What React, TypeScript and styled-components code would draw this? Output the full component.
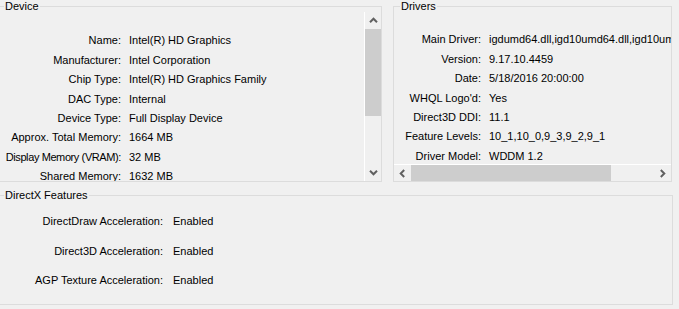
import styled, { createGlobalStyle } from "styled-components";

const GlobalStyle = createGlobalStyle`
  html, body {
    margin: 0;
    padding: 0;
    background: #f0f0f0;
    overflow: hidden;
  }
  body {
    font-family: "Liberation Sans", Arial, sans-serif;
    font-size: 11px;
    color: #000;
  }
`

const Page = styled.div`
  display: flex;
  flex-direction: column;
  gap: 7px;
  width: 682px;
  margin-left: -3px;
`

const TopRow = styled.div`
  display: flex;
  gap: 11px;
`

const Group = styled.fieldset<{ $width: number; $height: number }>`
  box-sizing: border-box;
  width: ${p => p.$width}px;
  height: ${p => p.$height}px;
  min-width: 0;
  margin: 0;
  padding: 0;
  border: 1px solid #dcdcdc;
  display: flex;
  flex-direction: column;
`

const Legend = styled.legend`
  margin-left: 6px;
  padding: 0 1px;
  font-size: 11px;
  line-height: 12px;
  color: #000;
`

const Panel = styled.div<{ $dir: "row" | "column" }>`
  flex: 1;
  min-height: 0;
  display: flex;
  flex-direction: ${p => p.$dir};
`

const Viewport = styled.div<{ $top: number }>`
  flex: 1;
  min-width: 0;
  min-height: 0;
  overflow: hidden;
  padding-top: ${p => p.$top}px;
`

const DataGrid = styled.div<{ $label: number; $gap: number; $row: number }>`
  display: grid;
  grid-template-columns: ${p => p.$label}px max-content;
  grid-auto-rows: ${p => p.$row}px;
  column-gap: ${p => p.$gap}px;
  align-items: center;
  line-height: 13px;
`

const Label = styled.div<{ $tight?: boolean }>`
  text-align: right;
  white-space: nowrap;
  letter-spacing: ${p => (p.$tight ? "-0.4px" : "0")};
`

const Value = styled.div`
  white-space: nowrap;
`

const VScroll = styled.div`
  width: 16px;
  border-left: 1px solid #fff;
  display: flex;
  flex-direction: column;
  background: #f0f0f0;
`

const HScroll = styled.div`
  height: 16px;
  border-top: 1px solid #fff;
  display: flex;
  background: #f0f0f0;
`

const ArrowButton = styled.div<{ $horizontal?: boolean }>`
  width: ${p => (p.$horizontal ? "17px" : "16px")};
  height: ${p => (p.$horizontal ? "16px" : "17px")};
  display: flex;
  align-items: center;
  justify-content: center;
  flex-shrink: 0;
`

const Track = styled.div<{ $horizontal?: boolean }>`
  flex: 1;
  display: flex;
  flex-direction: ${p => (p.$horizontal ? "row" : "column")};
`

const Thumb = styled.div<{ $horizontal?: boolean }>`
  background: #cdcdcd;
  ${p => (p.$horizontal ? "height: 100%;" : "width: 100%;")}
`

type Dir = "up" | "down" | "left" | "right"

const rotation: Record<Dir, number> = { up: 0, right: 90, down: 180, left: 270 }

function Chevron({ dir }: { dir: Dir }) {
  return (
    <svg width="9" height="9" viewBox="0 0 9 9" style={{ transform: `rotate(${rotation[dir]}deg)` }}>
      <polyline points="1,6.2 4.5,2.7 8,6.2" fill="none" stroke="#606060" strokeWidth="2" />
    </svg>
  )
}

type Row = { label: string; value: string; tight?: boolean }

const deviceRows: Row[] = [
  { label: "Name:", value: "Intel(R) HD Graphics" },
  { label: "Manufacturer:", value: "Intel Corporation" },
  { label: "Chip Type:", value: "Intel(R) HD Graphics Family" },
  { label: "DAC Type:", value: "Internal" },
  { label: "Device Type:", value: "Full Display Device" },
  { label: "Approx. Total Memory:", value: "1664 MB" },
  { label: "Display Memory (VRAM):", value: "32 MB", tight: true },
  { label: "Shared Memory:", value: "1632 MB" },
]

const driverRows: Row[] = [
  { label: "Main Driver:", value: "igdumd64.dll,igd10umd64.dll,igd10umd64.dll,igdumdx32.dll,igd10umd32.dll" },
  { label: "Version:", value: "9.17.10.4459" },
  { label: "Date:", value: "5/18/2016 20:00:00" },
  { label: "WHQL Logo'd:", value: "Yes" },
  { label: "Direct3D DDI:", value: "11.1" },
  { label: "Feature Levels:", value: "10_1,10_0,9_3,9_2,9_1" },
  { label: "Driver Model:", value: "WDDM 1.2" },
]

const featureRows: Row[] = [
  { label: "DirectDraw Acceleration:", value: "Enabled" },
  { label: "Direct3D Acceleration:", value: "Enabled" },
  { label: "AGP Texture Acceleration:", value: "Enabled" },
]

function Rows({ rows }: { rows: Row[] }) {
  return (
    <>
      {rows.flatMap(row => [
        <Label key={row.label} $tight={row.tight}>{row.label}</Label>,
        <Value key={row.label + "-v"}>{row.value}</Value>,
      ])}
    </>
  )
}

export default function App() {
  return (
    <>
      <GlobalStyle />
      <Page>
        <TopRow>
          <Group $width={385} $height={182}>
            <Legend>Device</Legend>
            <Panel $dir="row">
              <Viewport $top={19}>
                <DataGrid $label={123} $gap={8} $row={19.45}>
                  <Rows rows={deviceRows} />
                </DataGrid>
              </Viewport>
              <VScroll>
                <ArrowButton><Chevron dir="up" /></ArrowButton>
                <Track>
                  <Thumb style={{ height: 87 }} />
                </Track>
                <ArrowButton><Chevron dir="down" /></ArrowButton>
              </VScroll>
            </Panel>
          </Group>
          <Group $width={279} $height={182}>
            <Legend>Drivers</Legend>
            <Panel $dir="column">
              <Viewport $top={18}>
                <DataGrid $label={87} $gap={8} $row={19.45}>
                  <Rows rows={driverRows} />
                </DataGrid>
              </Viewport>
              <HScroll>
                <ArrowButton $horizontal><Chevron dir="left" /></ArrowButton>
                <Track $horizontal>
                  <Thumb $horizontal style={{ width: 200 }} />
                </Track>
                <ArrowButton $horizontal><Chevron dir="right" /></ArrowButton>
              </HScroll>
            </Panel>
          </Group>
        </TopRow>
        <Group $width={676} $height={116}>
          <Legend>DirectX Features</Legend>
          <Panel $dir="column">
            <Viewport $top={6}>
              <DataGrid $label={165} $gap={10} $row={29.6}>
                <Rows rows={featureRows} />
              </DataGrid>
            </Viewport>
          </Panel>
        </Group>
      </Page>
    </>
  )
}
